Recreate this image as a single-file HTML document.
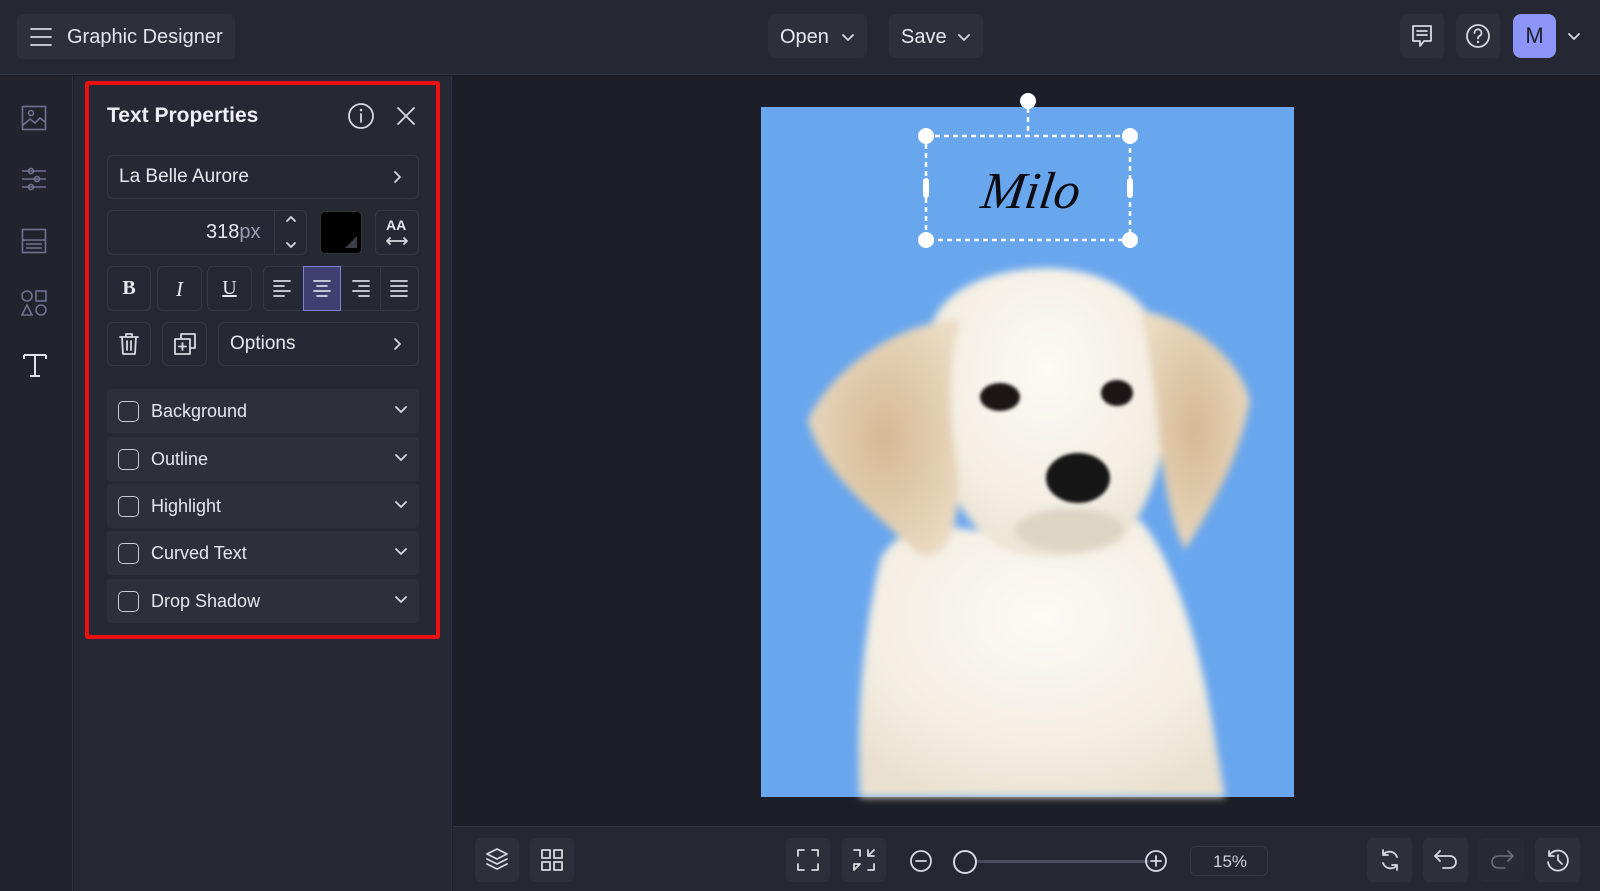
<!DOCTYPE html>
<html><head><meta charset="utf-8"><style>
*{box-sizing:border-box;margin:0;padding:0}
body{width:1600px;height:891px;background:#1d1e27;font-family:"Liberation Sans",sans-serif;color:#e8e9ef;position:relative;overflow:hidden}
.a{position:absolute}
.btn{position:absolute;background:#2d2f3b;border-radius:6px}
.ob{position:absolute;border:1px solid #363846;border-radius:6px;background:#262833}
svg{display:block}
.ic{stroke:#d8d9e0;fill:none;stroke-width:1.8;stroke-linecap:round;stroke-linejoin:round}
.si{stroke:#6f7290;fill:none;stroke-width:1.6}
.acc{position:absolute;left:107px;width:312px;height:44px;background:#2d2f3b;border-radius:3px}
.acc .cb{position:absolute;left:11px;top:12px;width:21px;height:21px;border:1.5px solid #c9cad3;border-radius:5px}
.acc span{position:absolute;left:44px;top:12px;font-size:18px;color:#e6e7ee}
.acc svg{position:absolute;right:12px;top:16px}
</style></head><body>
<div class="a" style="left:0;top:0;width:1600px;height:75px;background:#252732;border-bottom:1px solid #343644"></div>
<div class="btn" style="left:17px;top:14px;width:218px;height:45px"></div>
<svg class="a" style="left:29px;top:26px" width="24" height="22"><path class="ic" d="M2 3H22M2 11H22M2 19H22"/></svg>
<div class="a" style="left:67px;top:26px;font-size:20px;color:#e4e5ec">Graphic Designer</div>
<div class="btn" style="left:768px;top:14px;width:99px;height:44px"></div>
<div class="a" style="left:780px;top:26px;font-size:20px">Open</div>
<svg class="a" style="left:842px;top:33px" width="12" height="10"><path class="ic" d="M1 2L6 7L11 2"/></svg>
<div class="btn" style="left:889px;top:14px;width:94px;height:44px"></div>
<div class="a" style="left:901px;top:26px;font-size:20px">Save</div>
<svg class="a" style="left:958px;top:33px" width="12" height="10"><path class="ic" d="M1 2L6 7L11 2"/></svg>
<div class="btn" style="left:1400px;top:14px;width:44px;height:44px"></div>
<svg class="a" style="left:1410px;top:24px" width="24" height="26"><path class="ic" d="M3 2H21V17H14L10 22V17H3Z M7 7H17M7 11H17"/></svg>
<div class="btn" style="left:1456px;top:14px;width:44px;height:44px"></div>
<svg class="a" style="left:1465px;top:23px" width="26" height="26"><circle class="ic" cx="13" cy="13" r="11"/><path class="ic" d="M9.5 10a3.5 3.5 0 1 1 5 3c-1.2.6-1.5 1.3-1.5 2.5"/><circle cx="13" cy="19" r="1.2" fill="#d8d9e0"/></svg>
<div class="a" style="left:1513px;top:14px;width:43px;height:44px;background:#8c94f7;border-radius:8px;color:#1d1f2d;font-size:22px;text-align:center;line-height:44px">M</div>
<svg class="a" style="left:1568px;top:32px" width="12" height="10"><path class="ic" d="M1 2L6 7L11 2"/></svg>
<div class="a" style="left:0;top:76px;width:73px;height:815px;background:#22232d;border-right:1px solid #30323f"></div>
<svg class="a" style="left:21px;top:105px" width="26" height="26"><rect class="si" x="1.5" y="1.5" width="23" height="23"/><path class="si" d="M2 20L9 14L14 18L19 13L24 17"/><circle class="si" cx="10" cy="8" r="2.5"/></svg>
<svg class="a" style="left:21px;top:166px" width="26" height="26"><path class="si" d="M1 5H25M1 13H25M1 21H25"/><circle class="si" cx="10" cy="5" r="2.5" fill="#22232d"/><circle class="si" cx="16" cy="13" r="2.5" fill="#22232d"/><circle class="si" cx="10" cy="21" r="2.5" fill="#22232d"/></svg>
<svg class="a" style="left:21px;top:228px" width="26" height="26"><rect class="si" x="1.5" y="1.5" width="23" height="23"/><path class="si" d="M2 12H24M5 16H21M5 20H21"/></svg>
<svg class="a" style="left:20px;top:289px" width="28" height="28"><circle class="si" cx="7" cy="7" r="5"/><rect class="si" x="16" y="2" width="10" height="10"/><path class="si" d="M7 16L12 26H2Z"/><circle class="si" cx="21" cy="21" r="5"/></svg>
<svg class="a" style="left:22px;top:352px" width="26" height="26"><path d="M2 3H24M13 3V24M8 24H18M2 3V7M24 3V7" stroke="#e2e3ea" stroke-width="2" fill="none"/></svg>
<div class="a" style="left:74px;top:76px;width:378px;height:815px;background:#262833;border-right:1px solid #30323f"></div>
<div class="a" style="left:85px;top:81px;width:355px;height:558px;border:4px solid #ee0f0f;border-radius:3px"></div>
<div class="a" style="left:107px;top:104px;font-size:21px;font-weight:bold;color:#eeeff4">Text Properties</div>
<svg class="a" style="left:347px;top:102px" width="28" height="28"><circle class="ic" cx="14" cy="14" r="12"/><path class="ic" d="M14 12V20"/><circle cx="14" cy="8" r="1.3" fill="#d8d9e0"/></svg>
<svg class="a" style="left:396px;top:106px" width="20" height="20"><path class="ic" stroke-width="2" d="M2 2L18 18M18 2L2 18"/></svg>
<div class="ob" style="left:107px;top:155px;width:312px;height:44px"></div>
<div class="a" style="left:119px;top:166px;font-size:19px">La Belle Aurore</div>
<svg class="a" style="left:393px;top:170px" width="10" height="14"><path class="ic" d="M2 2L7 7L2 12"/></svg>
<div class="ob" style="left:107px;top:210px;width:200px;height:45px"></div>
<div class="a" style="left:274px;top:210px;width:1px;height:45px;background:#363846"></div>
<div class="a" style="left:206px;top:221px;font-size:20px">318<span style="color:#9a9cb0">px</span></div>
<svg class="a" style="left:285px;top:214px" width="12" height="36"><path class="ic" stroke-width="1.2" d="M2 7L6 3L10 7M2 29L6 33L10 29"/></svg>
<div class="a" style="left:320px;top:211px;width:42px;height:43px;background:#000;border-radius:5px;border:1px solid #333"></div>
<svg class="a" style="left:343px;top:234px" width="16" height="16"><path d="M14 2V14H2Z" fill="#3a3c48"/></svg>
<div class="ob" style="left:375px;top:210px;width:44px;height:45px"></div>
<div class="a" style="left:386px;top:217px;font-size:14px;font-weight:bold">AA</div>
<svg class="a" style="left:385px;top:236px" width="24" height="10"><path class="ic" d="M2 5H22M5 2L2 5L5 8M19 2L22 5L19 8"/></svg>
<div class="ob" style="left:107px;top:266px;width:44px;height:45px"></div>
<div class="a" style="left:107px;top:277px;width:44px;text-align:center;font-size:20px;font-weight:bold;font-family:'Liberation Serif',serif">B</div>
<div class="ob" style="left:157px;top:266px;width:45px;height:45px"></div>
<div class="a" style="left:157px;top:277px;width:45px;text-align:center;font-size:21px;font-style:italic;font-family:'Liberation Serif',serif">I</div>
<div class="ob" style="left:207px;top:266px;width:45px;height:45px"></div>
<div class="a" style="left:207px;top:277px;width:45px;text-align:center;font-size:20px;text-decoration:underline;font-family:'Liberation Serif',serif">U</div>
<div class="ob" style="left:263px;top:266px;width:156px;height:45px"></div>
<div class="a" style="left:303px;top:266px;width:38px;height:45px;background:#3f3f72;border:1px solid #7e80d6"></div>
<div class="a" style="left:380px;top:268px;width:1px;height:41px;background:#363846"></div>
<svg class="a" style="left:273px;top:279px" width="140" height="20"><g class="ic" stroke-width="1.4"><path d="M1 2H17M1 7H11M1 12H17M1 17H11"/><path d="M41 2H57M44 7H54M41 12H57M44 17H54"/><path d="M80 2H96M86 7H96M80 12H96M86 17H96"/><path d="M118 2H134M118 7H134M118 12H134M118 17H134"/></g></svg>
<div class="ob" style="left:107px;top:322px;width:44px;height:44px"></div>
<svg class="a" style="left:118px;top:332px" width="22" height="24"><path class="ic" stroke-width="1.5" d="M2 5H20M8 5V2H14V5M4 5L5 22H17L18 5M9 9V18M13 9V18"/></svg>
<div class="ob" style="left:162px;top:322px;width:45px;height:44px"></div>
<svg class="a" style="left:173px;top:332px" width="24" height="24"><path class="ic" stroke-width="1.5" d="M8 6V2H22V16H18"/><rect class="ic" stroke-width="1.5" x="2" y="7" width="15" height="15"/><path class="ic" stroke-width="1.5" d="M9.5 11V18M6 14.5H13"/></svg>
<div class="ob" style="left:218px;top:322px;width:201px;height:44px"></div>
<div class="a" style="left:230px;top:333px;font-size:19px">Options</div>
<svg class="a" style="left:393px;top:337px" width="10" height="14"><path class="ic" d="M2 2L7 7L2 12"/></svg>
<div class="acc" style="top:389px"><div class="cb"></div><span>Background</span><svg width="12" height="10"><path class="ic" d="M1 2L6 7L11 2"/></svg></div>
<div class="acc" style="top:437px"><div class="cb"></div><span>Outline</span><svg width="12" height="10"><path class="ic" d="M1 2L6 7L11 2"/></svg></div>
<div class="acc" style="top:484px"><div class="cb"></div><span>Highlight</span><svg width="12" height="10"><path class="ic" d="M1 2L6 7L11 2"/></svg></div>
<div class="acc" style="top:531px"><div class="cb"></div><span>Curved Text</span><svg width="12" height="10"><path class="ic" d="M1 2L6 7L11 2"/></svg></div>
<div class="acc" style="top:579px"><div class="cb"></div><span>Drop Shadow</span><svg width="12" height="10"><path class="ic" d="M1 2L6 7L11 2"/></svg></div>
<svg class="a" style="left:0;top:0" width="1600" height="826">
<defs>
<radialGradient id="fur" cx="0.5" cy="0.35" r="0.7"><stop offset="0" stop-color="#fcfaf5"/><stop offset="0.7" stop-color="#f3ede1"/><stop offset="1" stop-color="#e9e0cf"/></radialGradient>
<radialGradient id="ear" cx="0.5" cy="0.5" r="0.6"><stop offset="0" stop-color="#d6b994"/><stop offset="1" stop-color="#eadbc3"/></radialGradient>
<filter id="bl"><feGaussianBlur stdDeviation="4"/></filter>
<filter id="bl2"><feGaussianBlur stdDeviation="1.5"/></filter>
</defs>
<rect x="761" y="107" width="533" height="690" fill="#68a6ee"/>
<g filter="url(#bl)">
<path d="M860 797 C856 720 862 640 880 560 C900 520 950 520 1010 540 L1140 520 C1175 560 1200 650 1212 720 L1225 797Z" fill="url(#fur)"/>
<path d="M930 330 C940 290 990 268 1050 268 C1110 270 1150 300 1160 340 C1175 420 1160 500 1120 540 C1090 560 1020 565 990 540 C950 510 925 440 930 330Z" fill="url(#fur)"/>
<path d="M960 320 C900 320 830 370 808 420 C820 470 870 510 920 555 C955 565 965 500 955 450 C948 400 950 360 960 320Z" fill="url(#ear)"/>
<path d="M1140 310 C1195 320 1240 360 1250 400 C1240 460 1210 510 1185 550 C1165 510 1160 450 1155 400 C1150 360 1145 330 1140 310Z" fill="url(#ear)"/>
<ellipse cx="1070" cy="530" rx="55" ry="22" fill="#ddd4c4"/>
</g>
<g filter="url(#bl2)">
<ellipse cx="1000" cy="397" rx="20" ry="14" fill="#1a1414"/>
<ellipse cx="1117" cy="393" rx="16" ry="13" fill="#1a1414"/>
<ellipse cx="1078" cy="478" rx="32" ry="25" fill="#141319"/>
</g>
<rect x="926" y="136" width="204" height="104" fill="none" stroke="#fff" stroke-width="2.5" stroke-dasharray="5 4"/>
<path d="M1028 108V136" stroke="#fff" stroke-width="2.5" stroke-dasharray="5 4"/>
<g fill="#fff"><circle cx="1028" cy="101" r="8"/><circle cx="926" cy="136" r="8"/><circle cx="1130" cy="136" r="8"/><circle cx="926" cy="240" r="8"/><circle cx="1130" cy="240" r="8"/><rect x="923" y="178" width="6" height="20" rx="3"/><rect x="1127" y="178" width="6" height="20" rx="3"/></g>
<text x="1030" y="208" text-anchor="middle" font-family="Liberation Serif,serif" font-style="italic" font-size="52" fill="#0c0c12" transform="skewX(-8) translate(28,0)">Milo</text>
</svg>
<div class="a" style="left:453px;top:826px;width:1147px;height:65px;background:#252732;border-top:1px solid #343644"></div>
<div class="btn" style="left:475px;top:838px;width:44px;height:44px"></div>
<svg class="a" style="left:485px;top:847px" width="24" height="26"><path class="ic" stroke-width="1.6" d="M12 2L22 7L12 12L2 7Z M2 12L12 17L22 12 M2 17L12 22L22 17"/></svg>
<div class="btn" style="left:530px;top:838px;width:44px;height:44px"></div>
<svg class="a" style="left:541px;top:849px" width="22" height="22"><g class="ic" stroke-width="1.6"><rect x="1" y="1" width="8" height="8"/><rect x="13" y="1" width="8" height="8"/><rect x="1" y="13" width="8" height="8"/><rect x="13" y="13" width="8" height="8"/></g></svg>
<div class="btn" style="left:786px;top:838px;width:44px;height:44px"></div>
<svg class="a" style="left:797px;top:849px" width="22" height="22"><path class="ic" stroke-width="1.6" d="M1 7V1H7M15 1H21V7M21 15V21H15M7 21H1V15"/></svg>
<div class="btn" style="left:842px;top:838px;width:44px;height:44px"></div>
<svg class="a" style="left:853px;top:849px" width="22" height="22"><path class="ic" stroke-width="1.6" d="M1 1H7V7M21 7H15V1 M1 21V15H7 M15 21H21V15 M15 1L15 7M15 7L21 1M7 15L1 21"/></svg>
<svg class="a" style="left:909px;top:849px" width="24" height="24"><circle class="ic" cx="12" cy="12" r="10"/><path class="ic" d="M7 12H17"/></svg>
<div class="a" style="left:964px;top:860px;width:185px;height:3px;background:#4a4c5c"></div>
<div class="a" style="left:953px;top:850px;width:24px;height:24px;border:2px solid #d8d9e0;border-radius:50%;background:#252732"></div>
<svg class="a" style="left:1144px;top:849px" width="24" height="24"><circle class="ic" cx="12" cy="12" r="10"/><path class="ic" d="M7 12H17M12 7V17"/></svg>
<div class="ob" style="left:1190px;top:846px;width:78px;height:30px"></div>
<div class="a" style="left:1213px;top:852px;font-size:17px;color:#cfd0d8">15%</div>
<div class="btn" style="left:1367px;top:838px;width:45px;height:44px"></div>
<svg class="a" style="left:1378px;top:848px" width="24" height="24"><path class="ic" stroke-width="1.6" d="M19 9A8 8 0 0 0 5 7M5 7V2M5 7H10 M5 15A8 8 0 0 0 19 17M19 17V22M19 17H14"/></svg>
<div class="btn" style="left:1423px;top:838px;width:45px;height:44px"></div>
<svg class="a" style="left:1433px;top:849px" width="26" height="22"><path class="ic" stroke-width="1.6" d="M7 2L2 7L7 12M2 7H17A6 6 0 0 1 17 19H10"/></svg>
<div class="btn" style="left:1479px;top:838px;width:45px;height:44px;background:#282a35"></div>
<svg class="a" style="left:1489px;top:849px" width="26" height="22"><path fill="none" stroke="#6d6f7c" stroke-width="1.6" stroke-linecap="round" d="M19 2L24 7L19 12M24 7H9A6 6 0 0 0 9 19H16"/></svg>
<div class="btn" style="left:1535px;top:838px;width:45px;height:44px"></div>
<svg class="a" style="left:1545px;top:848px" width="25" height="25"><path class="ic" stroke-width="1.7" d="M4 8A10 10 0 1 1 3 14M4 3V8H9M13 7V12L17 16"/></svg>
</body></html>
